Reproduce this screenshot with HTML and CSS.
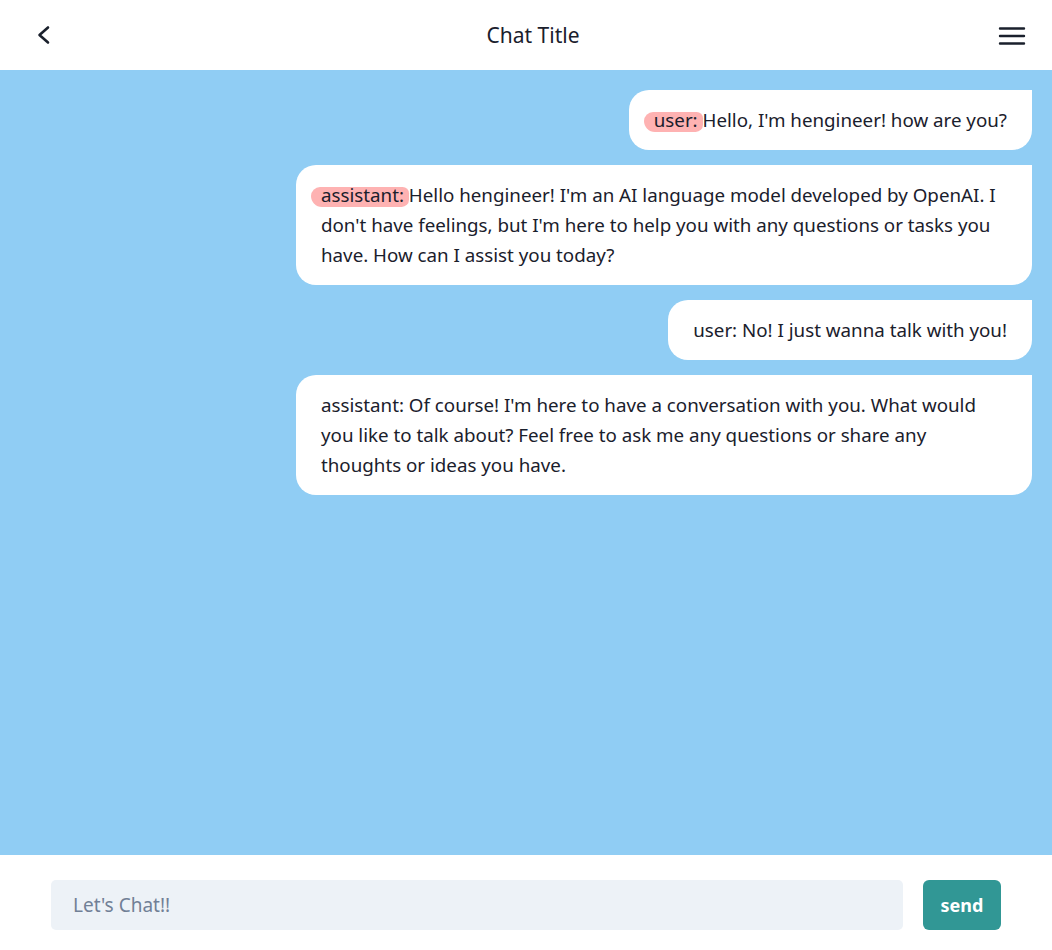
FILE: index.html
```html
<!DOCTYPE html>
<html lang="en">
<head>
    <meta charset="UTF-8">
    <meta name="viewport" content="width=device-width, initial-scale=1.0">
    <title>Chat Title</title>
    <link rel="stylesheet" href="styles.css">
</head>
<body>
    <div class="app">
        <header class="topbar">
            <button class="icon-btn" aria-label="back">
                <svg width="24" height="24" viewBox="0 0 24 24" fill="none" stroke="currentColor" stroke-width="2.6" stroke-linecap="round" stroke-linejoin="round"><path d="M16 4.5L7.5 12l8.5 7.5"/></svg>
            </button>
            <h1 class="title">Chat Title</h1>
            <button class="icon-btn menu-btn" aria-label="menu">
                <svg width="28" height="28" viewBox="0 0 28 28" fill="none" stroke="currentColor" stroke-width="2.4" stroke-linecap="round"><path d="M2 6.5h24M2 14h24M2 21.5h24"/></svg>
            </button>
        </header>

        <main class="messages">
            <div class="bubble"><span class="role">user: </span>Hello, I'm hengineer! how are you?</div>
            <div class="bubble"><span class="role">assistant: </span>Hello hengineer! I'm an AI language model developed by OpenAI. I don't have feelings, but I'm here to help you with any questions or tasks you have. How can I assist you today?</div>
            <div class="bubble">user: No! I just wanna talk with you!</div>
            <div class="bubble">assistant: Of course! I'm here to have a conversation with you. What would you like to talk about? Feel free to ask me any questions or share any thoughts or ideas you have.</div>
        </main>

        <footer class="composer">
            <input class="chat-input" type="text" placeholder="Let's Chat!!">
            <button class="send-btn">send</button>
        </footer>
    </div>
</body>
</html>
```

FILE: styles.css
```css
* { box-sizing: border-box; }
body { margin: 0; font-family: "Noto Sans", "Open Sans", sans-serif; color: #1a202c; background: #fff; }
.app { display: flex; flex-direction: column; height: 100vh; }
.topbar { height: 70px; display: grid; grid-template-columns: 1fr auto 1fr; align-items: center; padding: 0 26px 0 32px; background: #fff; flex-shrink: 0; }
.title { margin: 0 0 0 8px; font-size: 21px; font-weight: 400; color: #1a202c; }
.icon-btn { background: none; border: none; padding: 0; color: #1a202c; display: flex; cursor: pointer; }
.menu-btn { margin-top: 2px; justify-self: end; }
.messages { flex: 1; background: #90cdf4; padding: 20px 20px; display: flex; flex-direction: column; align-items: flex-end; gap: 15px; overflow-y: auto; }
.bubble { position: relative; z-index: 0; background: #fff; max-width: 736px; padding: 15px 25px; font-size: 18.75px; line-height: 30px; border-radius: 20px 0 20px 20px; }
/* marker highlight behind the role label */
.role { position: relative; }
.role::before { content: ""; position: absolute; left: -10px; right: 0; top: 5px; bottom: 0; z-index: -1; background: #feb2b2; border-radius: 10px 7px 8px 12px; }
.composer { height: 95px; display: flex; align-items: flex-start; gap: 20px; padding: 25px 51px 0 51px; background: #fff; flex-shrink: 0; }
.chat-input { flex: 1; height: 50px; border: none; border-radius: 5px; background: #edf2f7; padding: 0 22px; font-family: inherit; font-size: 19px; color: #1a202c; outline: none; }
.chat-input::placeholder { color: #718096; }
.send-btn { width: 78px; height: 50px; border: none; border-radius: 6px; background: #319795; color: #fff; font-family: inherit; font-size: 18px; font-weight: 700; cursor: pointer; }
```
